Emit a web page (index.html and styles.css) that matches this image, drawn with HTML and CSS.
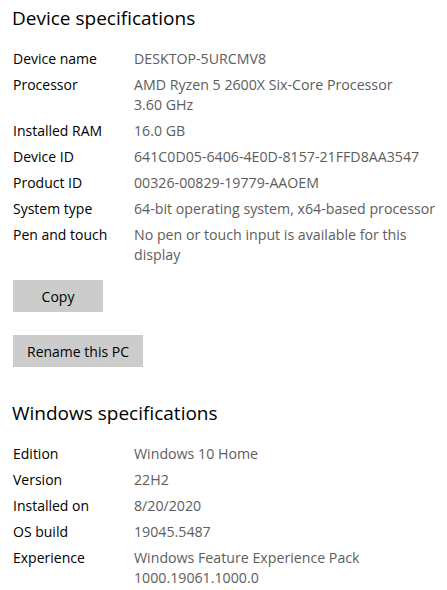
FILE: index.html
```html
<!DOCTYPE html>
<html>
<head>
<meta charset="utf-8">
<link rel="stylesheet" href="styles.css">
</head>
<body>
<main class="page">
  <section class="section">
    <h2 class="title">Device specifications</h2>
    <dl class="specs">
      <div class="row"><dt>Device name</dt><dd>DESKTOP-5URCMV8</dd></div>
      <div class="row"><dt>Processor</dt><dd>AMD Ryzen 5 2600X Six-Core Processor<br>3.60 GHz</dd></div>
      <div class="row"><dt>Installed RAM</dt><dd>16.0 GB</dd></div>
      <div class="row"><dt>Device ID</dt><dd>641C0D05-6406-4E0D-8157-21FFD8AA3547</dd></div>
      <div class="row"><dt>Product ID</dt><dd>00326-00829-19779-AAOEM</dd></div>
      <div class="row"><dt>System type</dt><dd>64-bit operating system, x64-based processor</dd></div>
      <div class="row"><dt>Pen and touch</dt><dd>No pen or touch input is available for this<br>display</dd></div>
    </dl>
    <div class="actions">
      <button class="btn btn-copy">Copy</button>
      <button class="btn">Rename this PC</button>
    </div>
  </section>
  <section class="section section-win">
    <h2 class="title">Windows specifications</h2>
    <dl class="specs">
      <div class="row"><dt>Edition</dt><dd>Windows 10 Home</dd></div>
      <div class="row"><dt>Version</dt><dd>22H2</dd></div>
      <div class="row"><dt>Installed on</dt><dd>8/20/2020</dd></div>
      <div class="row"><dt>OS build</dt><dd>19045.5487</dd></div>
      <div class="row"><dt>Experience</dt><dd>Windows Feature Experience Pack<br>1000.19061.1000.0</dd></div>
    </dl>
  </section>
</main>
</body>
</html>
```
FILE: styles.css
```css
html, body {
  margin: 0;
  padding: 0;
  background: #ffffff;
}
body {
  font-family: "Open Sans", "Noto Sans", "Liberation Sans", sans-serif;
  color: #000;
  font-size: 14px;
}
.page {
  padding: 4px 0 0 13px;
}
.title {
  margin: 0 0 17px -1px;
  font-size: 19px;
  line-height: 28px;
  font-weight: 400;
  color: #000;
}
.specs {
  margin: 0;
  display: flex;
  flex-direction: column;
  gap: 6px;
}
.row {
  display: grid;
  grid-template-columns: 121px 1fr;
  line-height: 20px;
}
.row dt {
  color: #000;
}
.row dd {
  margin: 0;
  color: #5d5d5d;
  font-size: 14.2px;
  white-space: nowrap;
}
.actions {
  margin-top: 15px;
  display: flex;
  flex-direction: column;
  align-items: flex-start;
  gap: 23px;
}
.btn {
  font: inherit;
  height: 32px;
  padding: 0 14px;
  border: none;
  background: #cccccc;
  color: #000;
}
.btn-copy {
  width: 90px;
}
.section-win {
  margin-top: 32px;
}
```
